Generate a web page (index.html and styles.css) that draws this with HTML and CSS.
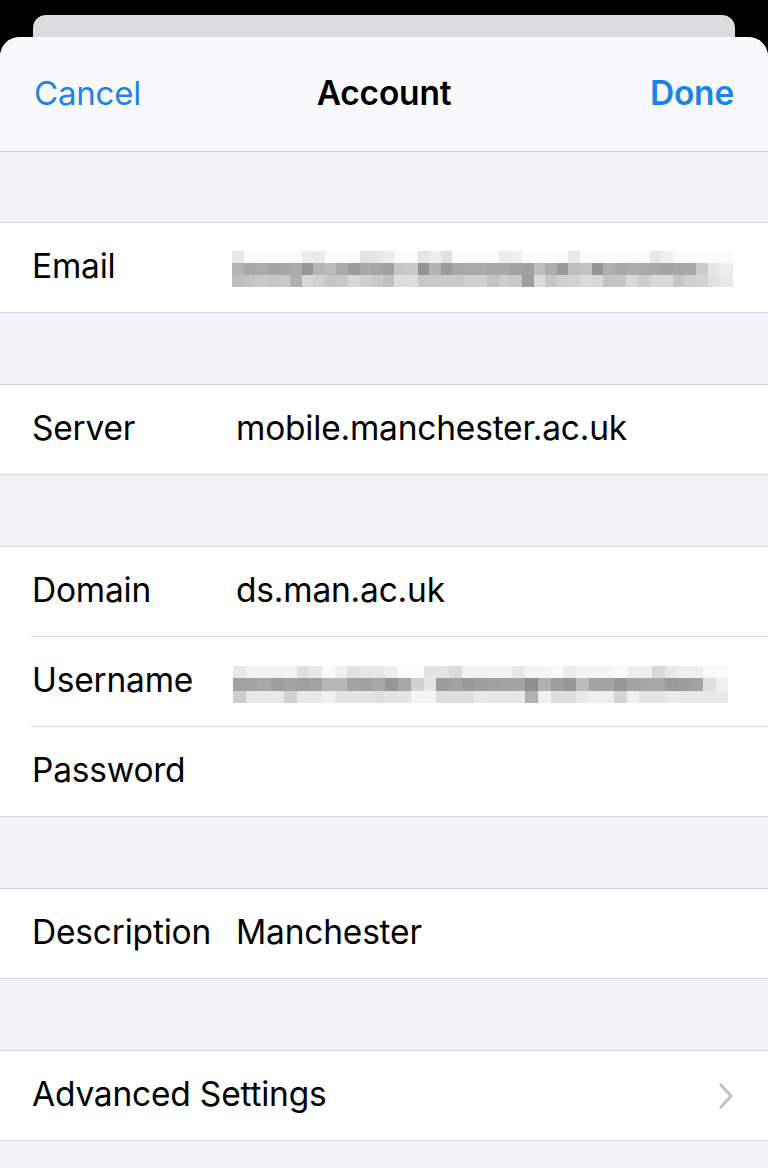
FILE: index.html
```html
<!DOCTYPE html>
<html>
<head>
<meta charset="utf-8">
<link rel="stylesheet" href="styles.css">
</head>
<body>
<div class="back-card"></div>
<div class="sheet">
  <div class="nav">
    <span class="nav-btn">Cancel</span>
    <span class="nav-title">Account</span>
    <span class="nav-btn done">Done</span>
  </div>

  <div class="group">
    <div class="row">
      <span class="label">Email</span>
      <span class="value"><span class="blur blur-email"><span class="b-top"></span><span class="b-mid"></span><span class="b-bot"></span></span></span>
    </div>
  </div>

  <div class="group">
    <div class="row">
      <span class="label">Server</span>
      <span class="value">mobile.manchester.ac.uk</span>
    </div>
  </div>

  <div class="group">
    <div class="row">
      <span class="label">Domain</span>
      <span class="value">ds.man.ac.uk</span>
    </div>
    <div class="row">
      <span class="label">Username</span>
      <span class="value"><span class="blur blur-user"><span class="b-top"></span><span class="b-mid"></span><span class="b-bot"></span></span></span>
    </div>
    <div class="row">
      <span class="label">Password</span>
      <span class="value"></span>
    </div>
  </div>

  <div class="group">
    <div class="row">
      <span class="label">Description</span>
      <span class="value">Manchester</span>
    </div>
  </div>

  <div class="group">
    <div class="row link">
      <span class="label wide">Advanced Settings</span>
      <svg class="chev" width="16" height="28" viewBox="0 0 16 28"><path d="M3 3 L13 14 L3 25" fill="none" stroke="#c4c4c7" stroke-width="3.2" stroke-linecap="round" stroke-linejoin="round"/></svg>
    </div>
  </div>
  <div class="tail"></div>
</div>
</body>
</html>
```

FILE: styles.css
```css
html, body {
  margin: 0;
  padding: 0;
  background: #000;
}
body {
  width: 768px;
  height: 1168px;
  overflow: hidden;
  font-family: "Inter", "Liberation Sans", sans-serif;
  color: #000;
}
.back-card {
  height: 40px;
  margin: 15px 33px 0;
  background: #dcdcde;
  border-radius: 13px 13px 0 0;
}
.sheet {
  margin-top: -18px;
  position: relative;
  background: #f2f2f7;
  border-radius: 20px 20px 0 0;
  overflow: hidden;
  height: 1131px;
}
.nav {
  height: 115px;
  box-sizing: border-box;
  padding: 0 34px 2px 34px;
  background: #f9f9fb;
  border-bottom: 1px solid #d0d0d4;
  display: flex;
  align-items: center;
  justify-content: space-between;
  font-size: 33px;
  letter-spacing: -0.2px;
  position: relative;
}
.nav-btn {
  color: #1a84e6;
}
.nav-btn.done {
  font-weight: 600;
  font-size: 33.5px;
}
.nav-title {
  font-weight: 600;
  font-size: 33.5px;
  position: absolute;
  left: 0;
  right: 0;
  text-align: center;
  pointer-events: none;
}
.group {
  margin-top: 70px;
  background: #fff;
  border-top: 1px solid #d6d6da;
  border-bottom: 1px solid #d6d6da;
}
.group + .group {
  margin-top: 71px;
}
.row {
  height: 89px;
  box-sizing: border-box;
  padding-bottom: 4px;
  display: flex;
  align-items: center;
  padding-left: 32px;
  font-size: 33.5px;
  letter-spacing: -0.2px;
  position: relative;
}
.row + .row {
  height: 90px;
  border-top: 1px solid #dcdcdf;
  margin-left: 31px;
  padding-left: 1px;
}
.label {
  width: 204px;
  flex: none;
}
.label.wide {
  width: auto;
  flex: 1;
}
.value {
  flex: 1;
  display: flex;
  align-items: center;
}
.chev {
  margin-right: 34px;
  margin-top: 4px;
}
.blur {
  display: flex;
  flex-direction: column;
  margin-left: -4px;
}
.blur > span {
  display: block;
  height: 12px;
}
.blur-email {
  width: 501px;
  margin-top: 6px;
}
.blur-email .b-top {
  background: linear-gradient(90deg,
    #e8e8e8 0 11.6px, #fbfbfb 0 69.6px, #ececec 0 81.2px, #eaeaea 0 92.8px, #fbfbfb 0 127.6px,
    #e3e3e3 0 139.2px, #e6e6e6 0 150.8px, #ececec 0 162.4px, #fbfbfb 0 185.6px,
    #e5e5e5 0 197.2px, #eeeeee 0 208.8px, #e0e0e0 0 220.4px, #fbfbfb 0 266.8px,
    #ececec 0 278.4px, #eeeeee 0 290px, #fbfbfb 0 336.4px, #e8e8e8 0 348px, #fbfbfb 0 417.6px,
    #e6e6e6 0 429.2px, #eeeeee 0 440.8px, #fbfbfb 0 501px);
}
.blur-email .b-mid {
  background: linear-gradient(90deg,
    #b4b4b4 0 11.6px, #a8a8a8 0 23.2px, #acacac 0 34.8px, #a4a4a4 0 46.4px, #a6a6a6 0 58px,
    #ababab 0 69.6px, #969696 0 81.2px, #b5b5b5 0 92.8px, #bababa 0 104.4px, #ababab 0 116px,
    #9c9c9c 0 127.6px, #a9a9a9 0 139.2px, #a6a6a6 0 150.8px, #a0a0a0 0 162.4px, #c6c6c6 0 174px,
    #c9c9c9 0 185.6px, #929292 0 197.2px, #b3b3b3 0 208.8px, #9a9a9a 0 220.4px, #a8a8a8 0 232px,
    #aaaaaa 0 243.6px, #aaaaaa 0 255.2px, #a7a7a7 0 266.8px, #a8a8a8 0 278.4px, #a2a2a2 0 290px,
    #a0a0a0 0 301.6px, #bdbdbd 0 313.2px, #adadad 0 324.8px, #9a9a9a 0 336.4px, #bdbdbd 0 348px,
    #c2c2c2 0 359.6px, #959595 0 371.2px, #b0b0b0 0 382.8px, #a7a7a7 0 394.4px, #acacac 0 406px,
    #aaaaaa 0 417.6px, #a8a8a8 0 429.2px, #a3a3a3 0 440.8px, #a6a6a6 0 452.4px, #a9a9a9 0 464px,
    #cccccc 0 475.6px, #e6e6e6 0 487.2px, #eeeeee 0 501px);
}
.blur-email .b-bot {
  background: linear-gradient(90deg,
    #bdbdbd 0 11.6px, #c2c2c2 0 23.2px, #c9c9c9 0 34.8px, #c4c4c4 0 46.4px, #c8c8c8 0 58px,
    #b0b0b0 0 69.6px, #d8d8d8 0 81.2px, #d0d0d0 0 92.8px, #c6c6c6 0 104.4px, #c8c8c8 0 116px,
    #d7d7d7 0 127.6px, #cfcfcf 0 139.2px, #c9c9c9 0 150.8px, #c0c0c0 0 162.4px, #dcdcdc 0 174px,
    #dedede 0 185.6px, #c8c8c8 0 197.2px, #c8c8c8 0 208.8px, #cacaca 0 220.4px, #c9c9c9 0 232px,
    #d0d0d0 0 243.6px, #d0d0d0 0 255.2px, #c3c3c3 0 266.8px, #cdcdcd 0 278.4px, #c8c8c8 0 290px,
    #9e9e9e 0 301.6px, #dcdcdc 0 313.2px, #c6c6c6 0 324.8px, #d0d0d0 0 336.4px, #d2d2d2 0 348px,
    #dadada 0 359.6px, #d8d8d8 0 371.2px, #c4c4c4 0 382.8px, #c6c6c6 0 394.4px, #d8d8d8 0 406px,
    #cdcdcd 0 417.6px, #d8d8d8 0 429.2px, #d9d9d9 0 440.8px, #c4c4c4 0 452.4px, #d0d0d0 0 464px,
    #d4d4d4 0 475.6px, #e0e0e0 0 487.2px, #e8e8e8 0 501px);
}
.blur-user {
  width: 495px;
  margin-top: 10px;
  margin-left: -3px;
}
.blur-user > span {
  height: 12.5px;
}
.blur-user .b-top {
  background: linear-gradient(90deg,
    #e8e8e8 0 12.7px, #f2f2f2 0 63.5px, #e0e0e0 0 76.2px, #e8e8e8 0 88.9px, #fafafa 0 101.6px,
    #f0f0f0 0 114.3px, #e2e2e2 0 127px, #e6e6e6 0 152.4px, #eeeeee 0 165.1px, #fcfcfc 0 190.5px,
    #e2e2e2 0 203.2px, #e4e4e4 0 215.9px, #dadada 0 228.6px, #f2f2f2 0 279.4px, #e8e8e8 0 292.1px,
    #f4f4f4 0 317.5px, #fafafa 0 330.2px, #ececec 0 342.9px, #f4f4f4 0 381px, #fafafa 0 393.7px,
    #eeeeee 0 419.1px, #d8d8d8 0 431.8px, #e8e8e8 0 444.5px, #efefef 0 469.9px, #fafafa 0 495.3px);
}
.blur-user .b-mid {
  background: linear-gradient(90deg,
    #a2a2a2 0 12.7px, #a4a4a4 0 25.4px, #a8a8a8 0 38.1px, #9e9e9e 0 50.8px, #a4a4a4 0 63.5px,
    #9e9e9e 0 76.2px, #a2a2a2 0 88.9px, #b6b6b6 0 101.6px, #b8b8b8 0 114.3px, #a3a3a3 0 127px,
    #a0a0a0 0 139.7px, #a8a8a8 0 152.4px, #959595 0 165.1px, #a8a8a8 0 177.8px, #d2d2d2 0 190.5px,
    #e5e5e5 0 203.2px, #9c9c9c 0 215.9px, #a2a2a2 0 228.6px, #9a9a9a 0 241.3px, #9e9e9e 0 254px,
    #a0a0a0 0 266.7px, #a2a2a2 0 279.4px, #a4a4a4 0 292.1px, #8e8e8e 0 304.8px, #b0b0b0 0 317.5px,
    #9e9e9e 0 330.2px, #969696 0 342.9px, #bcbcbc 0 355.6px, #a4a4a4 0 368.3px, #a2a2a2 0 381px,
    #979797 0 393.7px, #a4a4a4 0 406.4px, #a6a6a6 0 419.1px, #a8a8a8 0 431.8px, #999999 0 444.5px,
    #9c9c9c 0 457.2px, #a2a2a2 0 469.9px, #e0e0e0 0 482.6px, #f0f0f0 0 495.3px);
}
.blur-user .b-bot {
  background: linear-gradient(90deg,
    #cdcdcd 0 12.7px, #e8e8e8 0 50.8px, #d0d0d0 0 63.5px, #e8e8e8 0 88.9px, #efefef 0 101.6px,
    #e4e4e4 0 139.7px, #e0e0e0 0 152.4px, #e4e4e4 0 177.8px, #f4f4f4 0 203.2px, #dedede 0 241.3px,
    #e8e8e8 0 254px, #e6e6e6 0 292.1px, #b0b0b0 0 304.8px, #f0f0f0 0 317.5px, #dedede 0 342.9px,
    #e8e8e8 0 355.6px, #eeeeee 0 381px, #d4d4d4 0 393.7px, #f0f0f0 0 406.4px, #e4e4e4 0 431.8px,
    #eaeaea 0 444.5px, #e8e8e8 0 495.3px);
}
.tail {
  height: 40px;
}
```
